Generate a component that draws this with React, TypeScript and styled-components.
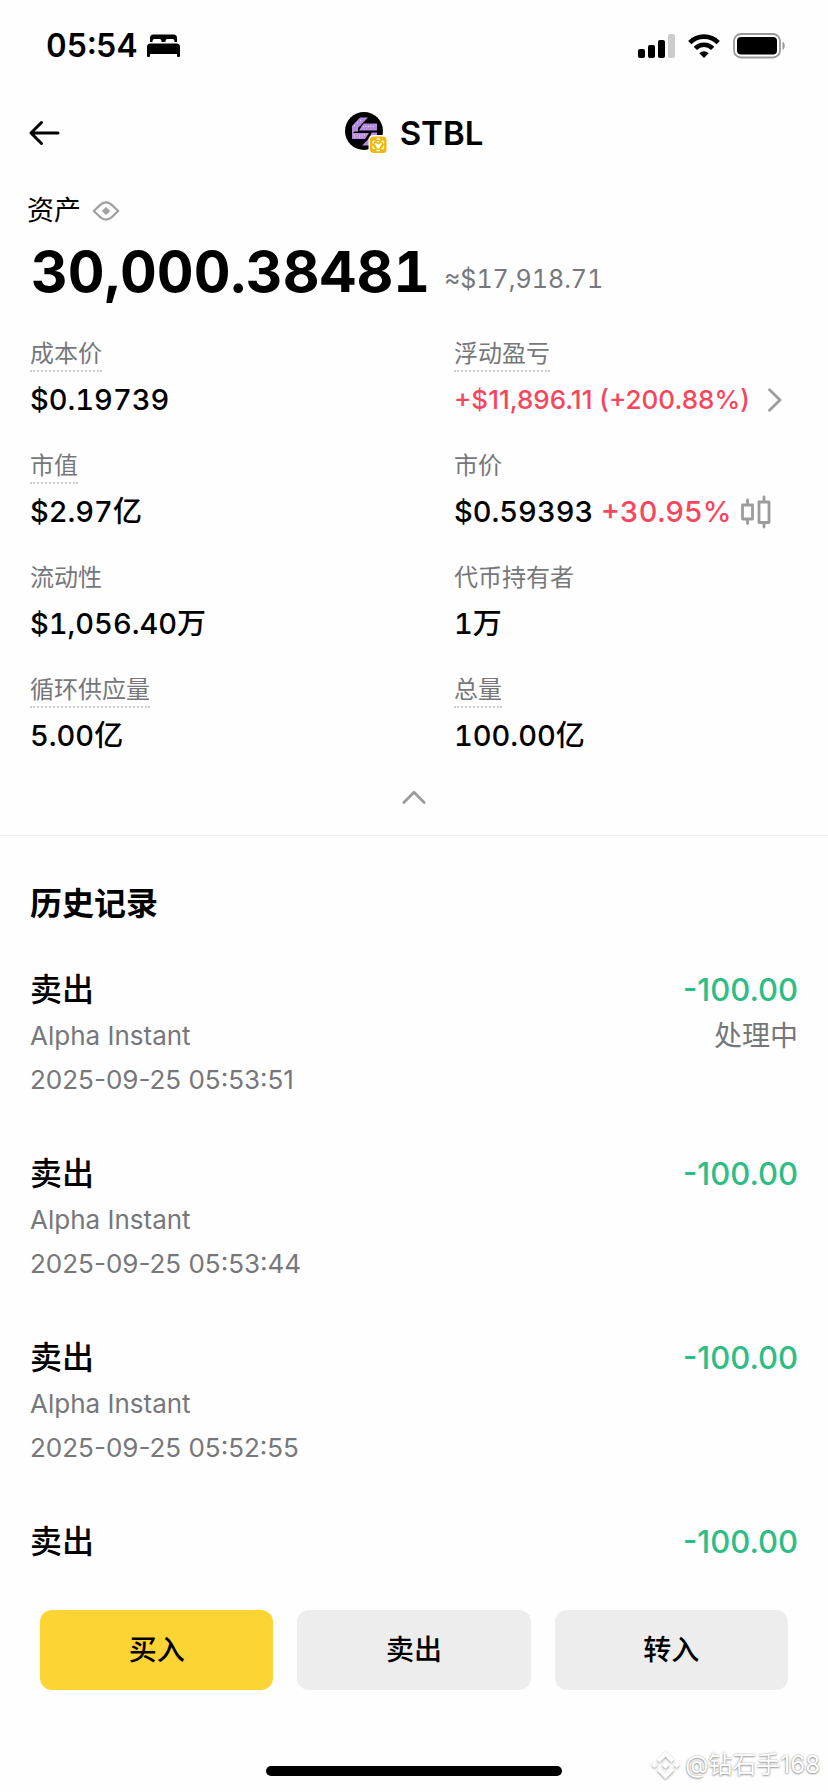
import React from 'react';
import styled, { createGlobalStyle } from 'styled-components';

const GlobalStyle = createGlobalStyle`
  * { box-sizing: border-box; }
  body {
    margin: 0;
    background: #fefefe;
    color: #000;
    font-family: Inter, 'Noto Sans CJK SC', sans-serif;
  }
  h1, h2, p, dl, dt, dd, ul { margin: 0; padding: 0; font-weight: inherit; font-size: inherit; }
  button { border: 0; padding: 0; margin: 0; background: none; color: inherit; font: inherit; cursor: pointer; }
  svg { display: block; }
`;

const Screen = styled.div`
  min-height: 100vh;
  display: flex;
  flex-direction: column;
`;

const StatusBar = styled.header`
  height: 92px;
  padding: 0 42px 0 46px;
  display: flex;
  align-items: center;
  justify-content: space-between;
`;

const StatusGroup = styled.div<{ $gap: number }>`
  display: flex;
  align-items: center;
  gap: ${(p) => p.$gap}px;
`;

const Clock = styled.span`
  font-size: 32px;
  line-height: 40px;
  font-weight: 600;
  font-variant-numeric: tabular-nums;
`;

const TitleBar = styled.nav`
  height: 82px;
  padding: 0 28px;
  display: grid;
  grid-template-columns: 1fr auto 1fr;
  align-items: center;
`;

const BackButton = styled.button`
  justify-self: start;
`;

const Token = styled.div`
  display: flex;
  align-items: center;
  gap: 13px;
`;

const TokenName = styled.h1`
  font-size: 33px;
  line-height: 40px;
  font-weight: 600;
`;

const Assets = styled.section`
  padding: 19px 27px 0;
  font-variant-numeric: tabular-nums;
`;

const AssetsLabel = styled.div`
  display: flex;
  align-items: center;
  gap: 11px;
  font-size: 27px;
  line-height: 36px;
`;

const BalanceLine = styled.div`
  display: flex;
  align-items: flex-end;
  gap: 14px;
  padding: 5px 4px 0;
`;

const Balance = styled.strong`
  font-size: 57px;
  line-height: 76px;
  font-weight: 700;
`;

const Approx = styled.span`
  font-size: 25px;
  line-height: 36px;
  padding-bottom: 13px;
  color: #76777a;
`;

const Stats = styled.dl`
  display: grid;
  grid-template-columns: 1fr 1fr;
  gap: 26px 80px;
  padding: 26px 30px 0;
`;

const Stat = styled.div`
  display: flex;
  flex-direction: column;
  align-items: flex-start;
  gap: 6px;
`;

const StatLabel = styled.dt<{ $hint?: boolean }>`
  padding-top: 2px;
  font-size: 24px;
  line-height: 32px;
  color: #76777a;
  border-bottom: 2px dotted ${(p) => (p.$hint ? '#cccccc' : 'transparent')};
`;

const StatValue = styled.dd<{ $small?: boolean }>`
  display: flex;
  align-items: center;
  gap: 8px;
  font-size: ${(p) => (p.$small ? 26 : 29)}px;
  line-height: 44px;
  font-weight: 500;
  font-variant-numeric: ${(p) => (p.$small ? 'normal' : 'tabular-nums')};
  white-space: nowrap;
`;

const Rise = styled.span`
  color: #f6465d;
`;

const MoreButton = styled.button`
  display: flex;
  align-items: center;
  gap: 18px;
`;

const Collapse = styled.button`
  height: 78px;
  display: grid;
  place-items: center;
  border-bottom: 1px solid #ededed;
`;

const History = styled.section`
  flex: 1;
  padding: 48px 30px 0;
`;

const HistoryTitle = styled.h2`
  font-size: 32px;
  line-height: 40px;
  font-weight: 600;
`;

const Records = styled.ul`
  list-style: none;
  display: flex;
  flex-direction: column;
  gap: 50px;
  padding-top: 44px;
`;

const Record = styled.li`
  display: flex;
  justify-content: space-between;
`;

const RecordSide = styled.div<{ $end?: boolean }>`
  display: flex;
  flex-direction: column;
  align-items: ${(p) => (p.$end ? 'flex-end' : 'flex-start')};
`;

const RecordMain = styled.span<{ $amount?: boolean }>`
  margin-bottom: 3px;
  font-size: ${(p) => (p.$amount ? 31 : 32)}px;
  line-height: 43px;
  font-weight: 500;
  color: ${(p) => (p.$amount ? '#2ebd85' : '#000')};
`;

const RecordSub = styled.span<{ $state?: boolean }>`
  font-size: ${(p) => (p.$state ? 28 : 26)}px;
  line-height: 44px;
  color: #76777a;
`;

const Footer = styled.footer`
  position: sticky;
  bottom: 0;
  background: #fefefe;
  padding: 40px 40px 16px;
`;

const Actions = styled.div`
  display: grid;
  grid-template-columns: repeat(3, 1fr);
  gap: 24px;
`;

const Action = styled.button<{ $primary?: boolean }>`
  height: 80px;
  padding-bottom: 4px;
  border-radius: 12px;
  font-size: 28px;
  font-weight: 500;
  background: ${(p) => (p.$primary ? '#fcd535' : '#ededed')};
`;

const HomeIndicator = styled.div`
  width: 296px;
  height: 10px;
  margin: 76px auto 0;
  border-radius: 5px;
  background: #000;
`;

const Watermark = styled.div`
  position: absolute;
  right: 8px;
  bottom: 10px;
  display: flex;
  align-items: center;
  gap: 5px;
  font-size: 24px;
  line-height: 34px;
  color: #fff;
  text-shadow: 0 0 2px rgba(0, 0, 0, 0.35), 0 1px 2px rgba(0, 0, 0, 0.35);
`;

const WatermarkMark = styled.svg`
  filter: drop-shadow(0 1px 1px rgba(0, 0, 0, 0.4));
`;

const BedIcon = () => (
  <svg width="33" height="24" viewBox="0 0 33 24" aria-label="睡眠">
    <path d="M3 8V4a3.500 3.500 0 0 1 3.500-3.500h20A3.500 3.500 0 0 1 30 4v4h-2.500V7a2 2 0 0 0-2-2h-5a2 2 0 0 0-2 2v1h-4V7a2 2 0 0 0-2-2h-5a2 2 0 0 0-2 2v1z" />
    <path d="M0 13a3.500 3.500 0 0 1 3.500-3.500h26A3.500 3.500 0 0 1 33 13v9a1 1 0 0 1-1 1h-1a1 1 0 0 1-1-1v-2H3v2a1 1 0 0 1-1 1H1a1 1 0 0 1-1-1z" />
  </svg>
);

const SignalIcon = () => (
  <svg width="37" height="24" viewBox="0 0 37 24" aria-label="信号">
    <rect x="0" y="15" width="7" height="9" rx="2" />
    <rect x="10" y="11" width="7" height="13" rx="2" />
    <rect x="20" y="6" width="7" height="18" rx="2" />
    <rect x="30" y="0" width="7" height="24" rx="2" fill="#ccc" />
  </svg>
);

const WifiIcon = () => (
  <svg width="32" height="24" viewBox="0 0 32 24" aria-label="无线网络">
    <g fill="none" stroke="#000" strokeWidth="4.600">
      <path d="M1.800 8.600C9.600 .6 22.400 .6 30.200 8.600" />
      <path d="M7.300 14.400C12.200 9.500 19.800 9.500 24.700 14.400" />
    </g>
    <path d="M11.300 19.300c2.800-2.700 6.600-2.700 9.400 0L16 24z" />
  </svg>
);

const BatteryIcon = () => (
  <svg width="53" height="26" viewBox="0 0 53 26" aria-label="电量">
    <rect x="1" y="1" width="46" height="23.500" rx="7" fill="none" stroke="#999" strokeWidth="1.800" />
    <rect x="4" y="4" width="40" height="17.500" rx="4" />
    <path d="M49.500 8.500c3 1.500 3 7 0 8.500z" fill="#999" />
  </svg>
);

const BackIcon = () => (
  <svg width="32" height="26" viewBox="0 0 32 26" fill="none" stroke="#000" strokeWidth="3" strokeLinecap="round" strokeLinejoin="round">
    <path d="M13.500 2.500L3 13l10.500 10.500M3 13h27" />
  </svg>
);

const TokenLogo = () => (
  <svg width="42" height="42" viewBox="0 0 42 42" aria-hidden="true">
    <circle cx="19" cy="19" r="19" fill="#000" />
    <path d="M7 14L15 5.500h8L13 16v3.500H7z" fill="#b58be0" />
    <path d="M7 15.500h6L8 21H7zM18.500 11.500H32v7H14z" fill="#b58be0" />
    <path d="M7 21h17l-4 6H7z" fill="#b58be0" />
    <path d="M26.500 20.500H32v5L23.500 33.500H17l8-8z" fill="#b58be0" />
    <path d="M9 13.500h2M12 11h2M15 8.500h2M18 14.500h12M9 23h12M9 25h10" stroke="#e9dfc9" strokeWidth="1" strokeDasharray="1 1.500" />
    <rect x="23.500" y="23" width="19" height="19" rx="4.500" fill="#fff" />
    <rect x="25" y="24.500" width="16.500" height="16.500" rx="3.500" fill="#f0b90b" />
    <path d="M33.250 26.700l5.300 3.050v6.100l-5.300 3.050-5.300-3.050v-6.100z" fill="none" stroke="#fff" strokeWidth="1.200" strokeDasharray="4.100 2" strokeDashoffset="2" />
    <path d="M29.800 30.500l3.450 1.900 3.450-1.900v2.300l-1.500 1v1.700l-1.950 1.300-1.950-1.300v-1.700l-1.500-1z" fill="#fff" />
    <path d="M31.700 29.700l1.550-.9 1.550.9-1.550.9z" fill="#fff" />
  </svg>
);

const EyeIcon = () => (
  <svg width="28" height="20" viewBox="0 0 28 20">
    <path d="M1.800 10L8.500 3.600C11.800 1 16.200 1 19.500 3.600L26.200 10l-6.700 6.400c-3.300 2.600-7.700 2.600-11 0z" fill="none" stroke="#a0a0a0" strokeWidth="2.200" strokeLinejoin="round" />
    <path d="M14 6.400L17.600 10 14 13.600 10.400 10z" fill="#a0a0a0" stroke="#a0a0a0" strokeLinejoin="round" />
  </svg>
);

const ChevronRight = () => (
  <svg width="14" height="24" viewBox="0 0 14 24" fill="none" stroke="#9c9c9c" strokeWidth="2.800" strokeLinecap="round" strokeLinejoin="round">
    <path d="M1.500 1.800L12 12 1.500 22.200" />
  </svg>
);

const ChevronUp = () => (
  <svg width="24" height="14" viewBox="0 0 24 14" fill="none" stroke="#9c9c9c" strokeWidth="2.800" strokeLinecap="round" strokeLinejoin="round">
    <path d="M1.800 12.500L12 2.300 22.200 12.500" />
  </svg>
);

const CandlesIcon = () => (
  <svg width="31" height="34" viewBox="0 0 31 34" fill="none" stroke="#9c9c9c" strokeWidth="2.800" strokeLinecap="round" strokeLinejoin="round">
    <path d="M2.500 10h10v14h-10zM7.500 5v5M7.500 24v4.500M19 7h10v20.500H19zM24 2v5M24 27.500V32" />
  </svg>
);

const WatermarkIcon = () => (
  <WatermarkMark width="29" height="32" viewBox="0 0 30 31" fill="#fff">
    <path d="M15 1l9 9-3 3-6-6-6 6-3-3zM15 30l9-9-3-3-6 6-6-6-3 3zM3.500 12.300l3.200 3.200-3.200 3.200L.3 15.500zM26.500 12.300l3.200 3.200-3.200 3.200-3.200-3.200zM15 11.500l4 4-4 4-4-4z" />
  </WatermarkMark>
);

const stats: { label: string; hint?: boolean; small?: boolean; value: React.ReactNode }[] = [
  { label: '成本价', hint: true, value: '$0.19739' },
  {
    label: '浮动盈亏',
    hint: true,
    small: true,
    value: (
      <MoreButton>
        <Rise>+$11,896.11 (+200.88%)</Rise>
        <ChevronRight />
      </MoreButton>
    ),
  },
  { label: '市值', hint: true, value: '$2.97亿' },
  {
    label: '市价',
    value: (
      <>
        <span>
          $0.59393 <Rise>+30.95%</Rise>
        </span>
        <button aria-label="K线图">
          <CandlesIcon />
        </button>
      </>
    ),
  },
  { label: '流动性', value: '$1,056.40万' },
  { label: '代币持有者', value: '1万' },
  { label: '循环供应量', hint: true, value: '5.00亿' },
  { label: '总量', hint: true, value: '100.00亿' },
];

const records = [
  { type: '卖出', amount: '-100.00', source: 'Alpha Instant', time: '2025-09-25 05:53:51', state: '处理中' },
  { type: '卖出', amount: '-100.00', source: 'Alpha Instant', time: '2025-09-25 05:53:44' },
  { type: '卖出', amount: '-100.00', source: 'Alpha Instant', time: '2025-09-25 05:52:55' },
  { type: '卖出', amount: '-100.00' },
];

export default function App() {
  return (
    <Screen>
      <GlobalStyle />
      <StatusBar>
        <StatusGroup $gap={10}>
          <Clock>05:54</Clock>
          <BedIcon />
        </StatusGroup>
        <StatusGroup $gap={13}>
          <SignalIcon />
          <WifiIcon />
          <BatteryIcon />
        </StatusGroup>
      </StatusBar>
      <TitleBar>
        <BackButton aria-label="返回">
          <BackIcon />
        </BackButton>
        <Token>
          <TokenLogo />
          <TokenName>STBL</TokenName>
        </Token>
      </TitleBar>
      <Assets>
        <AssetsLabel>
          资产
          <button aria-label="隐藏资产">
            <EyeIcon />
          </button>
        </AssetsLabel>
        <BalanceLine>
          <Balance>30,000.38481</Balance>
          <Approx>≈$17,918.71</Approx>
        </BalanceLine>
      </Assets>
      <Stats>
        {stats.map((s) => (
          <Stat key={s.label}>
            <StatLabel $hint={s.hint}>{s.label}</StatLabel>
            <StatValue $small={s.small}>{s.value}</StatValue>
          </Stat>
        ))}
      </Stats>
      <Collapse aria-label="收起">
        <ChevronUp />
      </Collapse>
      <History>
        <HistoryTitle>历史记录</HistoryTitle>
        <Records>
          {records.map((r, i) => (
            <Record key={i}>
              <RecordSide>
                <RecordMain>{r.type}</RecordMain>
                {r.source && <RecordSub>{r.source}</RecordSub>}
                {r.time && <RecordSub>{r.time}</RecordSub>}
              </RecordSide>
              <RecordSide $end>
                <RecordMain $amount>{r.amount}</RecordMain>
                {r.state && <RecordSub $state>{r.state}</RecordSub>}
              </RecordSide>
            </Record>
          ))}
        </Records>
      </History>
      <Footer>
        <Actions>
          <Action $primary>买入</Action>
          <Action>卖出</Action>
          <Action>转入</Action>
        </Actions>
        <HomeIndicator />
        <Watermark>
          <WatermarkIcon />
          <span>@钻石手168</span>
        </Watermark>
      </Footer>
    </Screen>
  );
}
